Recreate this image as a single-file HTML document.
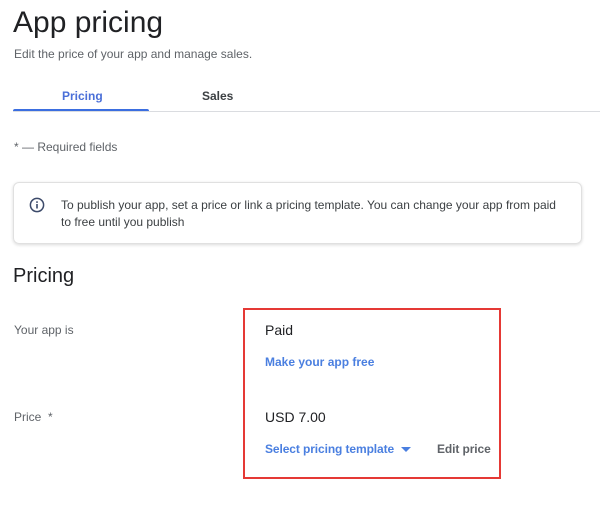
<!DOCTYPE html>
<html><head><meta charset="utf-8"><style>
body{margin:0;width:600px;height:522px;background:#fff;font-family:"Liberation Sans",sans-serif;position:relative;overflow:hidden;color:#202124}
.a{position:absolute;white-space:nowrap}
</style></head><body>
<div class="a" style="left:13px;top:6px;font-size:30px;color:#202124">App pricing</div>
<div class="a" style="left:14px;top:47px;font-size:12px;color:#5f6368">Edit the price of your app and manage sales.</div>
<div class="a" style="left:62px;top:89px;font-size:12px;color:#4a6fd8;font-weight:bold">Pricing</div>
<div class="a" style="left:202px;top:89px;font-size:12px;color:#3c4043;font-weight:bold">Sales</div>
<div class="a" style="left:13px;top:109px;width:136px;height:3px;background:#3b6ee0;border-radius:2px 2px 0 0"></div>
<div class="a" style="left:13px;top:111px;width:587px;height:1px;background:#dadce0"></div>
<div class="a" style="left:14px;top:140px;font-size:12px;color:#5f6368">* — Required fields</div>
<div class="a" style="left:13px;top:182px;width:567px;height:60px;border:1px solid #e0e0e0;border-radius:6px;box-shadow:0 1px 3px rgba(0,0,0,.15)"></div>
<svg class="a" style="left:29px;top:197px" width="16" height="16" viewBox="0 0 16 16"><circle cx="8" cy="8" r="6.6" fill="none" stroke="#3c4a6a" stroke-width="1.5"/><rect x="7.2" y="7" width="1.6" height="4.5" fill="#3c4a6a"/><rect x="7.2" y="4.3" width="1.6" height="1.6" fill="#3c4a6a"/></svg>
<div class="a" style="left:61px;top:197px;font-size:12px;line-height:17px;color:#3c4043">To publish your app, set a price or link a pricing template. You can change your app from paid<br>to free until you publish</div>
<div class="a" style="left:13px;top:265px;font-size:20px;color:#202124">Pricing</div>
<div class="a" style="left:14px;top:323px;font-size:12px;color:#5f6368">Your app is</div>
<div class="a" style="left:14px;top:410px;font-size:12px;color:#5f6368">Price &nbsp;*</div>
<div class="a" style="left:243px;top:308px;width:254px;height:167px;border:2px solid #e53935"></div>
<div class="a" style="left:265px;top:322px;font-size:14px;color:#202124">Paid</div>
<div class="a" style="left:265px;top:355px;font-size:12px;color:#4a7fe0;font-weight:bold">Make your app free</div>
<div class="a" style="left:265px;top:409px;font-size:14px;color:#202124">USD 7.00</div>
<div class="a" style="left:265px;top:442px;font-size:12px;color:#4a7fe0;font-weight:bold;letter-spacing:-0.1px">Select pricing template</div>
<svg class="a" style="left:401px;top:447px" width="10" height="6"><path d="M0 0L10 0L5 5Z" fill="#4a7fe0"/></svg>
<div class="a" style="left:437px;top:442px;font-size:12px;color:#5f6368;font-weight:bold;letter-spacing:-0.1px">Edit price</div>
</body></html>
